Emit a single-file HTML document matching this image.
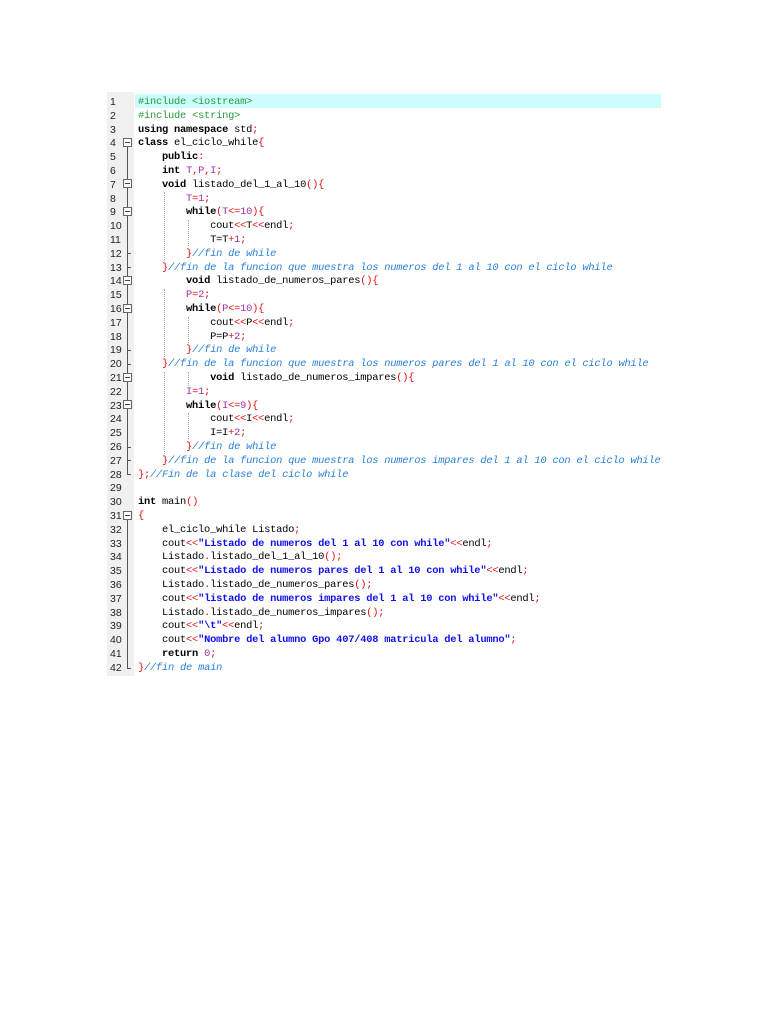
<!DOCTYPE html>
<html><head><meta charset="utf-8"><style>
body{margin:0;background:#fff;width:768px;height:1024px;position:relative;overflow:hidden}
#g{position:absolute;left:107px;top:92px;width:27px;height:584px;background:#f0f0f0}
#hl{position:absolute;left:135px;top:94px;width:526px;height:14px;background:#ccfcfc}
.l{position:absolute;left:0;height:14px;white-space:pre;font-family:"Liberation Mono",monospace;font-size:10.4px;letter-spacing:-0.23px;line-height:14px;color:#000}
.num{position:absolute;left:110px;width:14px;text-align:left;font-family:"Liberation Sans",sans-serif;font-size:10.5px;line-height:14px;color:#222}
.code{position:absolute;left:138px}
.k{font-weight:bold}.s{color:#1010ee;font-weight:bold}.c{color:#2a80d8;font-style:italic}.o{color:#e01010}.n{color:#a030a0}
#fl{position:absolute;left:127px;width:1px;background:#555}
.bx{position:absolute;left:123px;width:7px;height:7px;border:1px solid #666;background:#fff}
.bx:after{content:"";position:absolute;left:1px;top:3px;width:5px;height:1px;background:#444}
.tk{position:absolute;left:127px;width:4px;height:1px;background:#555}
.d{position:absolute;border-left:1px dotted #aaa}
</style></head><body>
<div id="g"></div><div id="hl"></div>
<div class="l" style="top:95px"><span class="code"><span style="color:#2a9a40">#include &lt;iostream&gt;</span></span></div>
<div class="l" style="top:108.8px"><span class="code"><span style="color:#2a9a40">#include &lt;string&gt;</span></span></div>
<div class="l" style="top:122.6px"><span class="code"><span class="k">using namespace</span> std<span class="o">;</span></span></div>
<div class="l" style="top:136.4px"><span class="code"><span class="k">class</span> el_ciclo_while<span class="o">{</span></span></div>
<div class="l" style="top:150.2px"><span class="code">    <span class="k">public</span><span class="o">:</span></span></div>
<div class="l" style="top:164px"><span class="code">    <span class="k">int</span> <span class="n">T</span><span class="o">,</span><span class="n">P</span><span class="o">,</span><span class="n">I</span><span class="o">;</span></span></div>
<div class="l" style="top:177.8px"><span class="code">    <span class="k">void</span> listado_del_1_al_10<span class="o">(){</span></span></div>
<div class="l" style="top:191.6px"><span class="code">        <span class="n">T</span><span class="o">=</span><span class="n">1</span><span class="o">;</span></span></div>
<div class="l" style="top:205.4px"><span class="code">        <span class="k">while</span><span class="o">(</span><span class="n">T</span><span class="o">&lt;=</span><span class="n">10</span><span class="o">){</span></span></div>
<div class="l" style="top:219.2px"><span class="code">            cout<span class="o">&lt;&lt;</span>T<span class="o">&lt;&lt;</span>endl<span class="o">;</span></span></div>
<div class="l" style="top:233px"><span class="code">            T=T<span class="o">+</span><span class="n">1</span><span class="o">;</span></span></div>
<div class="l" style="top:246.8px"><span class="code">        <span class="o">}</span><span class="c">//fin de while</span></span></div>
<div class="l" style="top:260.6px"><span class="code">    <span class="o">}</span><span class="c">//fin de la funcion que muestra los numeros del 1 al 10 con el ciclo while</span></span></div>
<div class="l" style="top:274.4px"><span class="code">        <span class="k">void</span> listado_de_numeros_pares<span class="o">(){</span></span></div>
<div class="l" style="top:288.2px"><span class="code">        <span class="n">P</span><span class="o">=</span><span class="n">2</span><span class="o">;</span></span></div>
<div class="l" style="top:302px"><span class="code">        <span class="k">while</span><span class="o">(</span><span class="n">P</span><span class="o">&lt;=</span><span class="n">10</span><span class="o">){</span></span></div>
<div class="l" style="top:315.8px"><span class="code">            cout<span class="o">&lt;&lt;</span>P<span class="o">&lt;&lt;</span>endl<span class="o">;</span></span></div>
<div class="l" style="top:329.6px"><span class="code">            P=P<span class="o">+</span><span class="n">2</span><span class="o">;</span></span></div>
<div class="l" style="top:343.4px"><span class="code">        <span class="o">}</span><span class="c">//fin de while</span></span></div>
<div class="l" style="top:357.2px"><span class="code">    <span class="o">}</span><span class="c">//fin de la funcion que muestra los numeros pares del 1 al 10 con el ciclo while</span></span></div>
<div class="l" style="top:371px"><span class="code">            <span class="k">void</span> listado_de_numeros_impares<span class="o">(){</span></span></div>
<div class="l" style="top:384.8px"><span class="code">        <span class="n">I</span><span class="o">=</span><span class="n">1</span><span class="o">;</span></span></div>
<div class="l" style="top:398.6px"><span class="code">        <span class="k">while</span><span class="o">(</span><span class="n">I</span><span class="o">&lt;=</span><span class="n">9</span><span class="o">){</span></span></div>
<div class="l" style="top:412.4px"><span class="code">            cout<span class="o">&lt;&lt;</span>I<span class="o">&lt;&lt;</span>endl<span class="o">;</span></span></div>
<div class="l" style="top:426.2px"><span class="code">            I=I<span class="o">+</span><span class="n">2</span><span class="o">;</span></span></div>
<div class="l" style="top:440px"><span class="code">        <span class="o">}</span><span class="c">//fin de while</span></span></div>
<div class="l" style="top:453.8px"><span class="code">    <span class="o">}</span><span class="c">//fin de la funcion que muestra los numeros impares del 1 al 10 con el ciclo while</span></span></div>
<div class="l" style="top:467.6px"><span class="code"><span class="o">};</span><span class="c">//Fin de la clase del ciclo while</span></span></div>
<div class="l" style="top:495.2px"><span class="code"><span class="k">int</span> main<span class="o">()</span></span></div>
<div class="l" style="top:509px"><span class="code"><span class="o">{</span></span></div>
<div class="l" style="top:522.8px"><span class="code">    el_ciclo_while Listado<span class="o">;</span></span></div>
<div class="l" style="top:536.6px"><span class="code">    cout<span class="o">&lt;&lt;</span><span class="s">"Listado de numeros del 1 al 10 con while"</span><span class="o">&lt;&lt;</span>endl<span class="o">;</span></span></div>
<div class="l" style="top:550.4px"><span class="code">    Listado<span class="o">.</span>listado_del_1_al_10<span class="o">();</span></span></div>
<div class="l" style="top:564.2px"><span class="code">    cout<span class="o">&lt;&lt;</span><span class="s">"Listado de numeros pares del 1 al 10 con while"</span><span class="o">&lt;&lt;</span>endl<span class="o">;</span></span></div>
<div class="l" style="top:578px"><span class="code">    Listado<span class="o">.</span>listado_de_numeros_pares<span class="o">();</span></span></div>
<div class="l" style="top:591.8px"><span class="code">    cout<span class="o">&lt;&lt;</span><span class="s">"listado de numeros impares del 1 al 10 con while"</span><span class="o">&lt;&lt;</span>endl<span class="o">;</span></span></div>
<div class="l" style="top:605.6px"><span class="code">    Listado<span class="o">.</span>listado_de_numeros_impares<span class="o">();</span></span></div>
<div class="l" style="top:619.4px"><span class="code">    cout<span class="o">&lt;&lt;</span><span class="s">"\t"</span><span class="o">&lt;&lt;</span>endl<span class="o">;</span></span></div>
<div class="l" style="top:633.2px"><span class="code">    cout<span class="o">&lt;&lt;</span><span class="s">"Nombre del alumno Gpo 407/408 matricula del alumno"</span><span class="o">;</span></span></div>
<div class="l" style="top:647px"><span class="code">    <span class="k">return</span> <span class="n">0</span><span class="o">;</span></span></div>
<div class="l" style="top:660.8px"><span class="code"><span class="o">}</span><span class="c">//fin de main</span></span></div>

<div class="num" style="top:95px">1</div><div class="num" style="top:108.8px">2</div>
<div class="num" style="top:122.6px">3</div><div class="num" style="top:136.4px">4</div><div class="num" style="top:150.2px">5</div><div class="num" style="top:164px">6</div><div class="num" style="top:177.8px">7</div><div class="num" style="top:191.6px">8</div><div class="num" style="top:205.4px">9</div><div class="num" style="top:219.2px">10</div><div class="num" style="top:233px">11</div><div class="num" style="top:246.8px">12</div><div class="num" style="top:260.6px">13</div><div class="num" style="top:274.4px">14</div><div class="num" style="top:288.2px">15</div><div class="num" style="top:302px">16</div><div class="num" style="top:315.8px">17</div><div class="num" style="top:329.6px">18</div><div class="num" style="top:343.4px">19</div><div class="num" style="top:357.2px">20</div><div class="num" style="top:371px">21</div><div class="num" style="top:384.8px">22</div><div class="num" style="top:398.6px">23</div><div class="num" style="top:412.4px">24</div><div class="num" style="top:426.2px">25</div><div class="num" style="top:440px">26</div><div class="num" style="top:453.8px">27</div><div class="num" style="top:467.6px">28</div><div class="num" style="top:481.4px">29</div><div class="num" style="top:495.2px">30</div><div class="num" style="top:509px">31</div><div class="num" style="top:522.8px">32</div><div class="num" style="top:536.6px">33</div><div class="num" style="top:550.4px">34</div><div class="num" style="top:564.2px">35</div><div class="num" style="top:578px">36</div><div class="num" style="top:591.8px">37</div><div class="num" style="top:605.6px">38</div><div class="num" style="top:619.4px">39</div><div class="num" style="top:633.2px">40</div><div class="num" style="top:647px">41</div><div class="num" style="top:660.8px">42</div>

<div id="fl" style="top:146px;height:328px"></div>
<div id="fl" style="top:519px;height:150px"></div>
<div class="tk" style="top:474px"></div>
<div class="tk" style="top:668px"></div>
<div class="tk" style="top:253px"></div><div class="tk" style="top:267px"></div><div class="tk" style="top:350px"></div><div class="tk" style="top:364px"></div><div class="tk" style="top:447px"></div><div class="tk" style="top:460px"></div>
<div class="bx" style="top:138px"></div><div class="bx" style="top:179px"></div><div class="bx" style="top:207px"></div><div class="bx" style="top:276px"></div><div class="bx" style="top:304px"></div><div class="bx" style="top:373px"></div><div class="bx" style="top:400px"></div><div class="bx" style="top:511px"></div>
<div class="d" style="left:164px;top:192px;height:68px"></div>
<div class="d" style="left:188px;top:220px;height:26px"></div>
<div class="d" style="left:164px;top:289px;height:68px"></div>
<div class="d" style="left:188px;top:317px;height:26px"></div>
<div class="d" style="left:164px;top:372px;height:82px"></div>
<div class="d" style="left:188px;top:372px;height:14px"></div>
<div class="d" style="left:188px;top:413px;height:26px"></div>
</body></html>
